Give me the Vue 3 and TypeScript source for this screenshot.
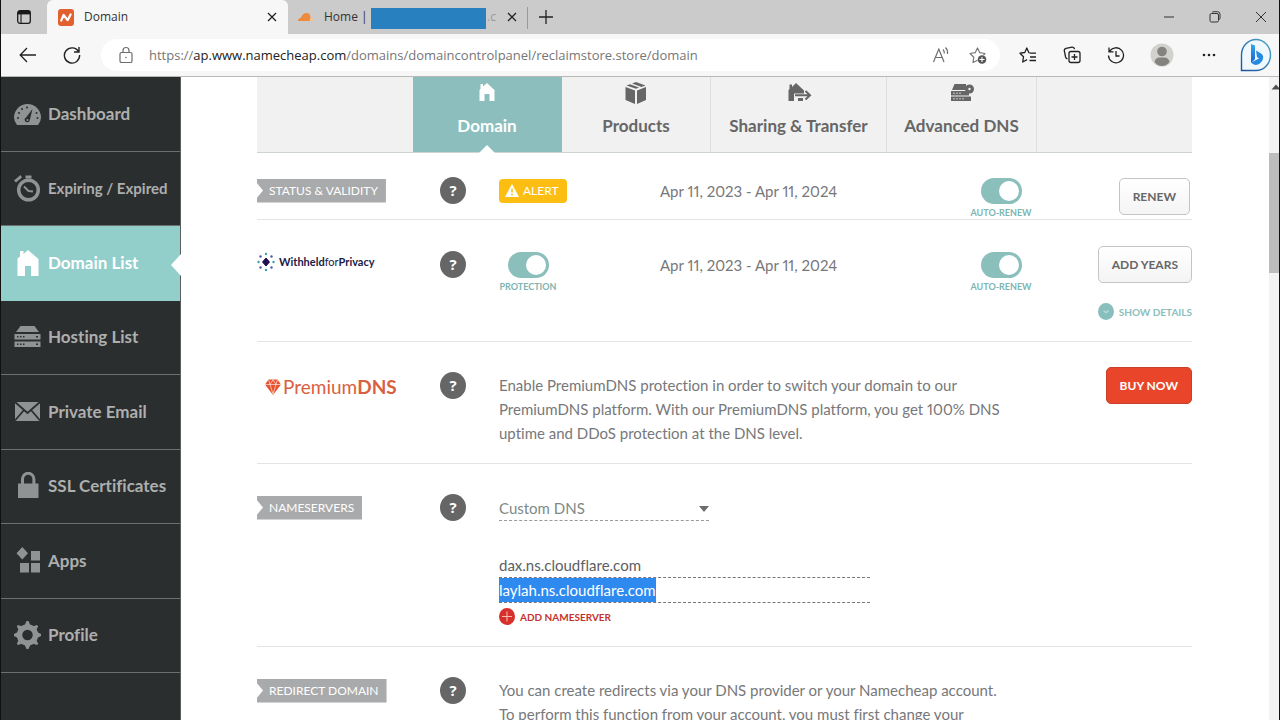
<script setup lang="ts">
import { onMounted, ref } from 'vue'

interface NavItem {
  id: string
  label: string
  active?: boolean
}

interface PanelTab {
  id: string
  label: string
  active?: boolean
}

const navItems: NavItem[] = [
  { id: 'dashboard', label: 'Dashboard' },
  { id: 'expiring', label: 'Expiring / Expired' },
  { id: 'domains', label: 'Domain List', active: true },
  { id: 'hosting', label: 'Hosting List' },
  { id: 'email', label: 'Private Email' },
  { id: 'ssl', label: 'SSL Certificates' },
  { id: 'apps', label: 'Apps' },
  { id: 'profile', label: 'Profile' },
]

const panelTabs: PanelTab[] = [
  { id: 'domain', label: 'Domain', active: true },
  { id: 'products', label: 'Products' },
  { id: 'sharing', label: 'Sharing & Transfer' },
  { id: 'dns', label: 'Advanced DNS' },
]

const protection = ref(true)
const renewDomain = ref(true)
const renewPrivacy = ref(true)
const dnsMode = ref('custom')
const nameservers = ref(['dax.ns.cloudflare.com', 'laylah.ns.cloudflare.com'])
const secondServer = ref<HTMLInputElement | null>(null)

onMounted(() => {
  secondServer.value?.focus({ preventScroll: true })
  secondServer.value?.select()
})
</script>

<template>
  <div class="window">
    <header class="tabstrip">
      <button class="tab-actions" aria-label="Tab actions">
        <svg width="16" height="16" viewBox="0 0 16 16">
          <rect x="1.7" y="1.7" width="12.6" height="12.6" rx="2.2" fill="none" stroke="#1a1a1a" stroke-width="1.3" />
          <path d="M2 2h12v3.4H2z" fill="#1a1a1a" />
          <path d="M5 5v9" stroke="#1a1a1a" stroke-width="1.1" />
        </svg>
      </button>
      <div class="tab current">
        <svg class="favicon" width="16" height="17" viewBox="0 0 16 17">
          <rect width="16" height="17" rx="3" fill="#e1622f" />
          <path d="M3.2 11.6 5.6 6l4 5.2L12.6 5.4" fill="none" stroke="#fff" stroke-width="2.2" stroke-linejoin="round" stroke-linecap="round" />
        </svg>
        <span class="tab-title">Domain</span>
        <button class="close" aria-label="Close tab">
          <svg width="10" height="10" viewBox="0 0 10 10"><path d="M1 1l8 8M9 1 1 9" stroke="#222" stroke-width="1.3" /></svg>
        </button>
      </div>
      <div class="tab other">
        <svg class="favicon" width="16" height="16" viewBox="0 0 16 16">
          <path d="M0 12c0-2 1-3 2.800-3C3.500 6 6 4 8.500 4c2.300 0 3.800 1.500 4 4l-.8 4z" fill="#ee8a3c" />
          <path d="M12 12l1-3.500c1.800 0 3 1.400 3 3.500z" fill="#f7c08a" />
        </svg>
        <span class="tab-title">Home | S</span>
        <span class="redacted"></span>
        <span class="tab-tail">.c</span>
        <button class="close" aria-label="Close tab">
          <svg width="10" height="10" viewBox="0 0 10 10"><path d="M1 1l8 8M9 1 1 9" stroke="#222" stroke-width="1.3" /></svg>
        </button>
      </div>
      <button class="new-tab" aria-label="New tab">
        <svg width="14" height="14" viewBox="0 0 14 14"><path d="M7 0v14M0 7h14" stroke="#222" stroke-width="1.3" /></svg>
      </button>
      <div class="window-buttons">
        <button aria-label="Minimize"><svg width="12" height="12" viewBox="0 0 12 12"><path d="M1 6h10" stroke="#333" /></svg></button>
        <button aria-label="Restore">
          <svg width="12" height="12" viewBox="0 0 12 12" fill="none" stroke="#333">
            <rect x="1" y="2.500" width="8.500" height="8.500" rx="1.500" />
            <path d="M3 1.500q.5-.8 1.500-.8h4q2.500 0 2.500 2.500v4q0 1-.8 1.500" />
          </svg>
        </button>
        <button aria-label="Close"><svg width="12" height="12" viewBox="0 0 12 12"><path d="M1 1l10 10M11 1 1 11" stroke="#333" /></svg></button>
      </div>
    </header>

    <div class="toolbar">
      <button class="tool" aria-label="Back">
        <svg width="18" height="16" viewBox="0 0 18 16" fill="none" stroke="#222" stroke-width="1.300"><path d="M17 8H1.500M8 1 1.200 8 8 15" /></svg>
      </button>
      <button class="tool" aria-label="Refresh">
        <svg width="18" height="18" viewBox="0 0 18 18" fill="none" stroke="#222" stroke-width="1.400"><path d="M15.500 5.500A7.600 7.600 0 1 0 16.600 9M16 1v5h-5" /></svg>
      </button>
      <div class="address">
        <svg class="lock" width="14" height="18" viewBox="0 0 14 18" fill="none" stroke="#6d6d6d" stroke-width="1.200">
          <rect x="1" y="6.500" width="12" height="10" rx="1.600" />
          <path d="M4 6.500V4.500a3 3 0 0 1 6 0v2" />
          <circle cx="7" cy="11.500" r=".8" fill="#6d6d6d" stroke="none" />
        </svg>
        <span class="url">https://<b>ap.www.namecheap.com</b>/domains/domaincontrolpanel/reclaimstore.store/domain</span>
        <button class="addr-btn" aria-label="Read aloud">
          <svg width="18" height="18" viewBox="0 0 18 18" fill="none" stroke="#6d6d6d" stroke-width="1.200">
            <path d="M1.500 16 6.800 3 12 16M3.500 11.500h6.700M11 3.500q1.500 1.500 1.300 4M13.500 1.500q2.500 2.500 2 6.500" />
          </svg>
        </button>
        <button class="addr-btn" aria-label="Add to favorites">
          <svg width="18" height="18" viewBox="0 0 18 18">
            <path d="M8.500 14.200 4 16.500l.8-5.300L1 7.500l5.200-.8L8.500 2l2.300 4.700 5.200.8-1.500 1.500" fill="none" stroke="#777" stroke-width="1.200" stroke-linejoin="round" />
            <circle cx="13" cy="13.500" r="4.300" fill="#555" />
            <path d="M13 11v5M10.500 13.500h5" stroke="#fff" stroke-width="1.100" />
          </svg>
        </button>
      </div>
      <div class="tools-right">
        <button aria-label="Favorites">
          <svg width="18" height="18" viewBox="0 0 18 18" fill="none" stroke="#222" stroke-width="1.300" stroke-linejoin="round">
            <path d="M10 7 7.800 2 5.800 6.500 1 7.200l3.500 3.600-.8 5.200 4.400-2.300M10.500 7.200H17M11 11h6M10.500 14.500H17" />
          </svg>
        </button>
        <button aria-label="Collections">
          <svg width="18" height="18" viewBox="0 0 18 18" fill="none" stroke="#222" stroke-width="1.300">
            <rect x="6" y="5.500" width="11" height="11" rx="2" />
            <path d="M11.500 8v6M8.500 11h6M4.500 13Q3 12.500 2.600 11L1.300 5Q1 3 3 2.400L9 1.200q2-.3 2.600 2" />
          </svg>
        </button>
        <button aria-label="History">
          <svg width="18" height="18" viewBox="0 0 18 18" fill="none" stroke="#222" stroke-width="1.300">
            <path d="M2.500 5.500A7.500 7.500 0 1 1 1.500 9.500M2 1.500v4.300h4.500M9 5v5h3.500" />
          </svg>
        </button>
        <button aria-label="Profile">
          <svg width="24" height="24" viewBox="0 0 24 24">
            <circle cx="12" cy="12" r="11.500" fill="#d2d1ce" />
            <circle cx="12" cy="8.500" r="4.800" fill="#85837f" />
            <path d="M4.500 19q1-4.500 5-4.500h5q4 0 5 4.500-3 4-7.500 4t-7.500-4z" fill="#85837f" />
          </svg>
        </button>
        <button aria-label="Settings and more">
          <svg width="16" height="4" viewBox="0 0 16 4" fill="#222"><circle cx="3" cy="2" r="1.300" /><circle cx="8" cy="2" r="1.300" /><circle cx="13" cy="2" r="1.300" /></svg>
        </button>
        <button aria-label="Bing">
          <svg width="32" height="34" viewBox="0 0 32 34">
            <defs>
              <linearGradient id="bingRing" x1="0" y1="1" x2="1" y2="0"><stop offset="0" stop-color="#1c4fa0" /><stop offset="1" stop-color="#4fa9c8" /></linearGradient>
              <linearGradient id="bingMark" x1="0" y1="0" x2="0" y2="1"><stop offset="0" stop-color="#35a7e8" /><stop offset="1" stop-color="#1b5fd0" /></linearGradient>
            </defs>
            <path d="M1.500 32.500V17A14.500 15.500 0 1 1 16 32.500z" fill="#eef8fd" stroke="url(#bingRing)" stroke-width="1.400" />
            <path d="M11 6 15 7.500v13.500l-4 4z" fill="url(#bingMark)" />
            <path d="M16 12.500l5 3q2.800 1.800 2 5-1 4-5 6-4 1.500-7-2l8-4-2-1.500z" fill="#258be0" />
          </svg>
        </button>
      </div>
    </div>

    <div class="page">
      <aside class="sidebar">
        <nav>
          <a v-for="item in navItems" :key="item.id" href="#" class="nav-item" :class="[item.id, { active: item.active }]">
            <svg class="nav-icon" width="28" height="28" viewBox="0 0 28 28" fill="currentColor">
              <template v-if="item.id === 'dashboard'">
                <path d="M3 25Q0 21.500 0 17.500a13.500 13.500 0 0 1 27 0q0 4-3 7.500z" />
                <g fill="#2b2e2e">
                  <circle cx="4" cy="18" r="1" /><circle cx="5" cy="13" r="1" /><circle cx="8" cy="9" r="1" /><circle cx="13" cy="7.500" r="1" /><circle cx="22.500" cy="13" r="1" /><circle cx="23.500" cy="18" r="1" />
                  <path d="M18.500 9l-2.700 11a2.600 2.600 0 1 1-3.600-2.700z" />
                </g>
                <circle cx="13.500" cy="20" r="1" />
              </template>
              <template v-else-if="item.id === 'expiring'">
                <circle cx="14.500" cy="16" r="9.800" fill="none" stroke="currentColor" stroke-width="3.500" />
                <path d="M11.500 1.500h6v3h-6zM0 6.500 6.500 1l1.500 2.500-6 5z" />
                <path d="M10 12.500l4.500 4.500 4.500.5" fill="none" stroke="currentColor" stroke-width="2" />
              </template>
              <path v-else-if="item.id === 'domains'" d="M6 2h3.500v3L14 1l7.500 6.500L24.500 10v17H17V17h-6v10H3.500V9.500L6 7.500z" />
              <template v-else-if="item.id === 'hosting'">
                <path d="M6.500 3h14l4.500 6H2zM.5 11h26v5.500H.5zM.5 18.500h26V24H.5z" />
                <path d="M3 13.700h1.500M6 13.700h1.500M9 13.700h1.500M22 13.700h2M3 21.200h1.500M6 21.200h1.500M9 21.200h1.500M22 21.200h2" stroke="#2b2e2e" stroke-width="1.600" />
              </template>
              <template v-else-if="item.id === 'email'">
                <path d="M1 4h25v19H1z" />
                <path d="M1 4l12.500 11L26 4M1 22.500 10 12M26 22.500 17 12" fill="none" stroke="#2b2e2e" stroke-width="1.800" />
              </template>
              <template v-else-if="item.id === 'ssl'">
                <path d="M4 11.500h20.500V26H4z" />
                <path d="M8.500 12V7a5.700 5.700 0 0 1 11.400 0v5" fill="none" stroke="currentColor" stroke-width="3" />
              </template>
              <path v-else-if="item.id === 'apps'" d="M8.300 0l5.700 6.200-5.700 6.200L2.500 6.200zM17 4h9v9.500h-9zM6 16h9v9.500H6zM17 16h9v9.500h-9z" />
              <template v-else>
                <circle cx="13.500" cy="14" r="8" fill="none" stroke="currentColor" stroke-width="5.500" />
                <path d="M10.500 4.500 12.500 0h2l2 4.500zM10.500 23.500l2 4.500h2l2-4.500zM4 11 0 13v2l4 2zM23 11l4 2v2l-4 2zM8.500 5.500 4 4 2.800 5.200 5 9.500zM18.500 5.500 23 4l1.200 1.200L22 9.500zM8.500 22.500 4 24l-1.200-1.200L5 18.500zM18.500 22.500 23 24l1.200-1.200L22 18.500z" />
              </template>
            </svg>
            <span>{{ item.label }}</span>
          </a>
        </nav>
      </aside>

      <main class="content">
        <nav class="panel-tabs">
          <a v-for="tab in panelTabs" :key="tab.id" href="#" class="panel-tab" :class="[tab.id, { active: tab.active }]">
            <svg width="26" height="24" viewBox="0 0 26 24" fill="currentColor">
              <path v-if="tab.id === 'domain'" d="M6.500 3H9v2.500L13 2l4.500 4.200L20.500 9v11h-5v-7h-5v7h-5V9l1-1z" />
              <template v-else-if="tab.id === 'products'">
                <path d="M2.500 6 12 9.500V23l-9.500-4zM14 9.500 23 6v13l-9 4zM3.500 4.500 7 3.200l9 3.300-3 1.200zM9 2.500 13 1l9.500 3.500L18.500 6z" />
              </template>
              <template v-else-if="tab.id === 'sharing'">
                <path d="M3.500 3.500H6V6l4-4 8 7.500v3H8V20H2.500V9l1-1z" />
                <path d="M12 17h5v3h-5z" />
                <path d="M9 14.200h14M19.500 10l4.500 4.200-4.500 4.300" fill="none" stroke="currentColor" stroke-width="2" />
              </template>
              <template v-else>
                <path d="M5.500 3H17v6H3zM2 10h18v4.500H2zM2 15.500h20V20H2z" />
                <circle cx="20.500" cy="8" r="4.500" />
                <circle cx="20.500" cy="8" r="1.200" fill="#f0f0f0" />
                <path d="M4 12.200h9M4 17.800h12" stroke="#c8c8c8" stroke-width="1" stroke-dasharray="2 1" />
              </template>
            </svg>
            <span>{{ tab.label }}</span>
          </a>
        </nav>

        <section class="row status">
          <div class="cell"><h2 class="ribbon">STATUS &amp; VALIDITY</h2></div>
          <div class="cell"><button class="help" aria-label="Help: status">?</button></div>
          <div class="cell">
            <span class="alert">
              <svg width="14" height="13" viewBox="0 0 14 13"><path d="M7 0l7 13H0z" fill="#fff" /><path d="M7 4.500v4M7 9.800v1.700" stroke="#fdbe14" stroke-width="1.500" /></svg>
              ALERT
            </span>
          </div>
          <div class="cell dates">Apr 11, 2023 - Apr 11, 2024</div>
          <label class="switch"><input v-model="renewDomain" type="checkbox" role="switch" />AUTO-RENEW</label>
          <div class="actions"><button class="btn">RENEW</button></div>
        </section>

        <section class="row privacy">
          <div class="cell">
            <span class="wfp">
              <svg width="18" height="20" viewBox="0 0 18 20">
                <path d="M9 6l3.500 4L9 14l-3.500-4z" fill="#201050" stroke="#201050" stroke-linejoin="round" />
                <g fill="#3a9fae"><circle cx="9" cy="2" r="1.200" /><circle cx="9" cy="18" r="1.200" /><circle cx="1.500" cy="10" r="1.200" /><circle cx="16.500" cy="10" r="1.200" /></g>
                <g fill="#4a5f9a"><circle cx="3.500" cy="4.500" r="1.200" /><circle cx="14.500" cy="4.500" r="1.200" /><circle cx="3.500" cy="15.500" r="1.200" /><circle cx="14.500" cy="15.500" r="1.200" /></g>
              </svg>
              <span><b>Withheld</b>for<b>Privacy</b></span>
            </span>
          </div>
          <div class="cell"><button class="help" aria-label="Help: privacy">?</button></div>
          <label class="switch"><input v-model="protection" type="checkbox" role="switch" />PROTECTION</label>
          <div class="cell dates">Apr 11, 2023 - Apr 11, 2024</div>
          <label class="switch"><input v-model="renewPrivacy" type="checkbox" role="switch" />AUTO-RENEW</label>
          <div class="actions">
            <button class="btn">ADD YEARS</button>
            <button class="details">
              <svg width="16" height="17" viewBox="0 0 16 17"><ellipse cx="8" cy="8.500" rx="8" ry="8.500" fill="#88bfbc" /><path d="M5.500 7.500 8 9.800l2.500-2.300" fill="none" stroke="#b9dedb" stroke-width="1.200" /></svg>
              SHOW DETAILS
            </button>
          </div>
        </section>

        <section class="row premium">
          <div class="cell">
            <span class="pdns">
              <svg width="16" height="16" viewBox="0 0 16 16">
                <path d="M3.500.5h9L16 5.500 8 16 0 5.500z" fill="#e8532f" />
                <path d="M0 5.500h16M5 5.500 8 15l3-9.500M3.500.5 5 5.500 8 .8l3 4.700L12.500.5" fill="none" stroke="#fff" stroke-width=".6" />
              </svg>
              <span>Premium<b>DNS</b></span>
            </span>
          </div>
          <div class="cell"><button class="help" aria-label="Help: PremiumDNS">?</button></div>
          <p class="copy">Enable PremiumDNS protection in order to switch your domain to our PremiumDNS platform. With our PremiumDNS platform, you get 100% DNS uptime and DDoS protection at the DNS level.</p>
          <div class="actions"><button class="btn buy">BUY NOW</button></div>
        </section>

        <section class="row servers">
          <div class="cell"><h2 class="ribbon">NAMESERVERS</h2></div>
          <div class="cell"><button class="help" aria-label="Help: nameservers">?</button></div>
          <div class="wide">
            <div class="select-wrap">
              <select v-model="dnsMode" aria-label="Nameserver type">
                <option value="custom">Custom DNS</option>
                <option value="basic">Namecheap BasicDNS</option>
              </select>
              <svg class="caret" width="10" height="6" viewBox="0 0 10 6"><path d="M0 0h10L5 6z" fill="#6d6e70" /></svg>
            </div>
            <div class="ns-list">
              <div class="ns-field">
                <input v-model="nameservers[0]" type="text" aria-label="Nameserver 1" spellcheck="false" />
              </div>
              <div class="ns-field editing">
                <input ref="secondServer" v-model="nameservers[1]" type="text" aria-label="Nameserver 2" spellcheck="false" />
              </div>
            </div>
            <button class="add-ns">
              <svg width="16" height="17" viewBox="0 0 16 17"><ellipse cx="8" cy="8.500" rx="8" ry="8.500" fill="#d5302b" /><path d="M8 3.500v10M3 8.500h10" stroke="#f3b9b3" stroke-width="1.100" /></svg>
              ADD NAMESERVER
            </button>
          </div>
        </section>

        <section class="row redirect">
          <div class="cell"><h2 class="ribbon">REDIRECT DOMAIN</h2></div>
          <div class="cell"><button class="help" aria-label="Help: redirect">?</button></div>
          <p class="copy">You can create redirects via your DNS provider or your Namecheap account. To perform this function from your account, you must first change your</p>
        </section>
      </main>

      <div class="scrollbar" aria-hidden="true">
        <svg width="10" height="8" viewBox="0 0 10 8"><path d="M2.500 7.500 7 2.500l4.500 5z" fill="#505050" /></svg>
        <div class="thumb"></div>
      </div>
    </div>
  </div>
</template>

<style>
body {
  margin: 0;
  overflow: hidden;
}
</style>

<style scoped>
* {
  box-sizing: border-box;
}

button {
  font: inherit;
  color: inherit;
  background: none;
  border: 0;
  padding: 0;
  cursor: pointer;
}

a {
  color: inherit;
  text-decoration: none;
}

svg {
  display: block;
  flex: none;
}

.window {
  display: flex;
  flex-direction: column;
  height: 100vh;
  overflow: hidden;
  border: solid #111;
  border-width: 0 1px;
  font-family: Lato, "Open Sans", sans-serif;
  font-variant-ligatures: no-common-ligatures;
  background: #fff;
}

/* Browser tabs */
.tabstrip {
  display: flex;
  flex: none;
  height: 34px;
  background: #cbcbcb;
  font: 12px/34px "Open Sans", "Noto Sans", sans-serif;
  color: #333;
}

.tab-actions {
  display: flex;
  align-items: center;
  justify-content: center;
  width: 46px;
}

.tab {
  display: flex;
  align-items: center;
}

.current {
  width: 241px;
  padding: 0 11px;
  background: #f7f7f7;
  border-radius: 6px 6px 0 0;
}

.favicon {
  margin-right: 10px;
}

.close {
  display: flex;
  align-items: center;
  justify-content: center;
  width: 10px;
  height: 20px;
  margin-left: auto;
}

.other {
  width: 240px;
  padding: 0 11px 0 10px;
  position: relative;
}

.other::after {
  content: "";
  position: absolute;
  right: 0;
  top: 7px;
  height: 22px;
  border-right: 1px solid #999;
}

.other .tab-title {
  width: 47px;
  white-space: nowrap;
}

.redacted {
  position: relative;
  width: 115px;
  height: 21px;
  margin-top: 3px;
  background: #2980bf;
}

.tab-tail {
  color: #999;
  padding-left: 1px;
}

.new-tab {
  display: flex;
  align-items: center;
  justify-content: center;
  width: 36px;
}

.window-buttons {
  display: flex;
  margin-left: auto;
}

.window-buttons button {
  display: flex;
  align-items: center;
  justify-content: center;
  width: 46px;
}

.window-buttons button:last-child {
  width: 36px;
  margin-left: 5px;
}

/* Address row */
.toolbar {
  display: flex;
  flex: none;
  align-items: center;
  height: 43px;
  padding-left: 5px;
  background: #f7f7f7;
  border-bottom: 1px solid #b9b9b9;
}

.tool {
  display: flex;
  align-items: center;
  justify-content: center;
  width: 44px;
  height: 32px;
}

.address {
  display: flex;
  flex: 1;
  align-items: center;
  height: 32px;
  margin-left: 7px;
  padding: 0 13px 0 18px;
  border-radius: 16px;
  background: #fff;
}

.url {
  flex: 1;
  padding-left: 16px;
  font: 13px/20px "Open Sans", "Noto Sans", sans-serif;
  color: #767676;
  white-space: nowrap;
}

.url b {
  font-weight: 400;
  color: #222;
}

.addr-btn {
  margin-left: 19px;
}

.tools-right {
  display: flex;
  align-items: center;
  padding-left: 6px;
}

.tools-right button {
  display: flex;
  align-items: center;
  justify-content: center;
  width: 44px;
  height: 36px;
}

.tools-right button:nth-child(n + 4) {
  width: 47px;
}

/* Page */
.page {
  display: flex;
  flex: 1;
  min-height: 0;
}

.sidebar {
  flex: none;
  width: 180px;
  background: #2b2e2e;
  border-right: 1px solid #5a5d5d;
}

.sidebar nav {
  display: flex;
  flex-direction: column;
  height: 596px;
}

.nav-item {
  display: flex;
  flex: 1;
  align-items: center;
  gap: 6px;
  padding-left: 13px;
  border-bottom: 1px solid #6c7070;
  font-size: 17px;
  font-weight: 700;
  line-height: 24px;
  color: #adafaf;
  white-space: nowrap;
  position: relative;
}

.nav-item.expiring {
  font-size: 15px;
}

.nav-icon {
  color: #8f9393;
}

.nav-item.active {
  background: #92ceca;
  border-bottom-color: #92ceca;
  color: #fff;
}

.nav-item.active .nav-icon {
  color: #fff;
}

.nav-item.active::after {
  content: "";
  position: absolute;
  right: -1px;
  top: 28px;
  border: solid transparent;
  border-width: 11px 10px 11px 0;
  border-right-color: #fff;
}

.content {
  flex: 1;
  min-width: 0;
  padding: 0 77px 0 76px;
  overflow: hidden;
  color: #77787a;
}

.panel-tabs {
  display: flex;
  height: 76px;
  padding-left: 156px;
  background: #f1f1f1;
  border-bottom: 1px solid #cdd3d3;
}

.panel-tab {
  display: flex;
  flex-direction: column;
  align-items: center;
  gap: 9px;
  width: 149px;
  padding-top: 4px;
  border-right: 1px solid #dcdfdf;
  font-size: 17px;
  font-weight: 700;
  line-height: 24px;
  white-space: nowrap;
  position: relative;
  color: #666;
}

.panel-tab.sharing {
  width: 176px;
}

.panel-tab.dns {
  width: 150px;
}

.panel-tab.active {
  background: #8bbebc;
  border-right-color: #8bbebc;
  color: #fff;
}

.panel-tab.active::after {
  content: "";
  position: absolute;
  bottom: -1px;
  left: 66px;
  border: solid transparent;
  border-width: 0 8px 8px;
  border-bottom-color: #fff;
}

.row {
  display: grid;
  grid-template-columns: 183px 59px 161px 1fr 60px 161px;
  align-items: start;
  border-bottom: 1px solid #e4e4e4;
}

.status {
  height: 67px;
  padding-top: 25px;
}

.privacy {
  height: 122px;
  padding-top: 32px;
}

.premium {
  height: 122px;
  padding-top: 31px;
}

.servers {
  height: 183px;
  padding-top: 31px;
}

.redirect {
  padding-top: 31px;
  border: 0;
}

.cell {
  display: flex;
  align-items: center;
  height: 25px;
}

.ribbon {
  margin: 0;
  padding: 0 8px 0 12px;
  background: #a9aaab;
  clip-path: polygon(0 0, 100% 0, 100% 100%, 0 100%, 0 80%, 6px 50%, 0 20%);
  font-size: 12px;
  font-weight: 400;
  line-height: 24px;
  color: #fff;
}

.help {
  width: 26px;
  height: 27px;
  border-radius: 50%;
  background: #666;
  color: #fff;
  font: 700 15px/27px "Open Sans", sans-serif;
  text-align: center;
}

.alert {
  display: flex;
  align-items: center;
  gap: 4px;
  padding: 0 8px 0 6px;
  border-radius: 4px;
  background: #fdbe14;
  color: #fff;
  font-size: 12px;
  line-height: 24px;
}

.dates {
  font-size: 15px;
  font-variant-numeric: proportional-nums;
  line-height: 24px;
  white-space: nowrap;
}

.switch {
  display: flex;
  flex-direction: column;
  align-items: center;
  gap: 3px;
  width: 60px;
  font-size: 9px;
  font-weight: 700;
  line-height: 12px;
  color: #7db5b1;
  white-space: nowrap;
}

.privacy .switch:nth-child(3) {
  width: 58px;
}

.switch input {
  appearance: none;
  width: 41px;
  height: 26px;
  margin: 0;
  padding: 3px;
  border-radius: 13px;
  background: #8abfbc;
  cursor: pointer;
}

.switch input::before {
  content: "";
  display: block;
  width: 20px;
  height: 20px;
  border-radius: 50%;
  background: #fff;
}

.switch input:checked::before {
  margin-left: auto;
}

.actions {
  grid-column: 6;
  display: flex;
  flex-direction: column;
  align-items: flex-end;
  gap: 20px;
}

.status .actions {
  padding-right: 2px;
}

.privacy .actions,
.premium .actions {
  margin-top: -6px;
}

.btn {
  height: 37px;
  padding: 0 13px;
  border: 1px solid #c4c4c4;
  border-radius: 5px;
  background: linear-gradient(#fff, #f4f4f4);
  font-size: 12px;
  font-weight: 700;
  color: #666;
}

.btn.buy {
  border-color: #c9402a;
  background: #e9452b;
  color: #fff;
}

.details {
  display: flex;
  align-items: center;
  gap: 5px;
  font-size: 10px;
  font-weight: 700;
  color: #8abfbc;
}

.wfp {
  display: flex;
  align-items: center;
  gap: 4px;
  margin-top: -5px;
  font-size: 11px;
  line-height: 20px;
  color: #201a48;
}

.pdns {
  display: flex;
  align-items: center;
  gap: 2px;
  padding: 3px 0 0 8px;
  font-size: 19px;
  line-height: 24px;
  color: #d9603f;
}

.copy {
  grid-column: 3 / 6;
  max-width: 510px;
  margin: 0;
  font-size: 15px;
  font-variant-numeric: proportional-nums;
  line-height: 24px;
}

.wide {
  grid-column: 3 / 6;
}

.select-wrap {
  position: relative;
  width: 210px;
  height: 26px;
  border-bottom: 1px dashed #9a9a9a;
}

select {
  appearance: none;
  display: block;
  width: 100%;
  height: 26px;
  padding: 0;
  border: 0;
  background: none;
  font: 15px/24px Lato, sans-serif;
  color: #7c8a86;
}

.caret {
  position: absolute;
  right: 0;
  top: 11px;
  pointer-events: none;
}

.ns-list {
  width: 371px;
  max-width: 100%;
  padding-top: 31px;
}

.ns-field {
  display: flex;
}

.ns-field input {
  field-sizing: content;
  height: 25px;
  padding: 0;
  border: 0;
  outline: 0;
  background: none;
  font: 15px/24px Lato, sans-serif;
  font-variant-ligatures: no-common-ligatures;
  color: #5d5e62;
}

.ns-field.editing {
  border: dashed #777;
  border-width: 1px 0;
}

.ns-field.editing input {
  height: 24px;
  background: #2f8af0;
  color: #fff;
}

.ns-field input::selection {
  background: #2f8af0;
  color: #fff;
}

.add-ns {
  display: flex;
  align-items: center;
  gap: 5px;
  margin-top: 5px;
  font-size: 10px;
  font-weight: 700;
  color: #c5322e;
}

.scrollbar {
  flex: none;
  width: 10px;
  padding-top: 5px;
  background: #f3f3f3;
}

.thumb {
  height: 120px;
  margin-top: 63px;
  background: #bdbdbd;
}
</style>
